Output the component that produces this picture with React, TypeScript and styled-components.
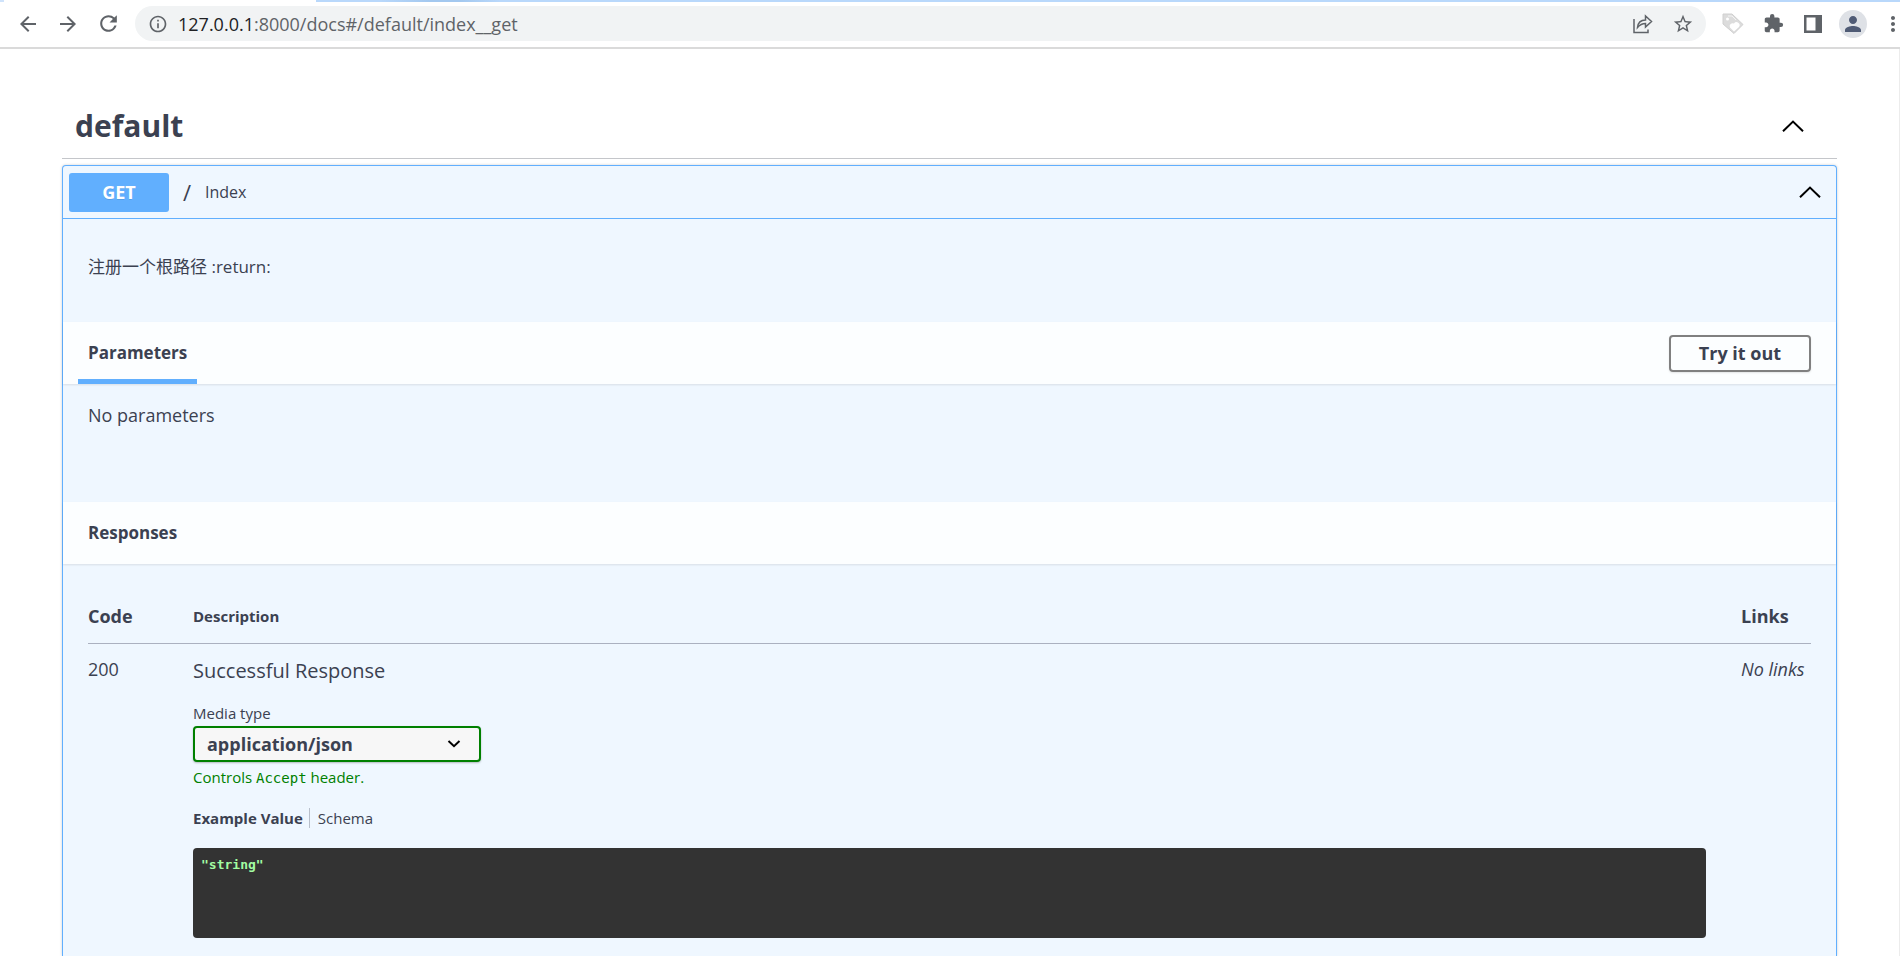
import React from "react";
import styled, { createGlobalStyle } from "styled-components";
import {
  MdArrowBack,
  MdArrowForward,
  MdRefresh,
  MdInfoOutline,
  MdStarBorder,
  MdExtension,
  MdPerson,
  MdMoreVert,
} from "react-icons/md";

const ink = "#3b4151";
const blue = "#61affe";
const sans = '"Open Sans", "Noto Sans CJK SC", sans-serif';

const GlobalStyle = createGlobalStyle`
  *, *::before, *::after { box-sizing: border-box; }
  body { margin: 0; background: #fff; color: ${ink}; font-family: ${sans}; }
  button, select { font-family: inherit; color: inherit; }
  h2, h4, p, pre { margin: 0; }
`;

const Page = styled.div`
  display: flex;
  flex-direction: column;
  min-height: 100vh;
`;

/* Browser chrome */

const TabStrip = styled.div`
  display: flex;
  height: 2px;
  background: linear-gradient(90deg, #b9d8fb 0 380px, #a3c8ef 430px 460px, #b9d8fb 500px);
`;

const ActiveTab = styled.div`
  width: 316px;
  border-left: 4px solid #cfe3fb;
  background: #fff;
`;

const Toolbar = styled.header`
  display: flex;
  align-items: center;
  height: 47px;
  padding: 0 0 2px 8px;
  border-bottom: 2px solid #dadada;
  overflow: hidden;
`;

const IconButton = styled.button`
  display: grid;
  flex: none;
  place-items: center;
  width: 40px;
  height: 34px;
  padding: 0;
  border: 0;
  background: none;
  color: #5f6368;
`;

const MenuButton = styled(IconButton)`
  width: 27px;
  padding-left: 8px;
`;

const AddressBar = styled.div`
  display: flex;
  flex: 1;
  align-items: center;
  height: 35px;
  margin: 0 7px;
  padding: 0 3px;
  border-radius: 18px;
  background: #f1f3f4;
`;

const Url = styled.span`
  flex: 1;
  color: #5f6368;
  font-size: 18px;
  line-height: 24px;
`;

const Host = styled.span`
  color: #202124;
`;

const Avatar = styled.span`
  display: grid;
  place-items: center;
  width: 28px;
  height: 28px;
  border-radius: 50%;
  background: #dee1e6;
  color: #4f5b75;
`;

/* Documentation page */

const Docs = styled.main`
  display: flex;
  flex: 1;
  flex-direction: column;
  padding: 40px 62px 0;
  border-right: 1px solid #ececec;
`;

const TagHeader = styled.div`
  display: flex;
  align-items: center;
  justify-content: space-between;
  height: 70px;
  padding: 4px 24px 0 13px;
  border-bottom: 1px solid rgba(59, 65, 81, 0.3);
`;

const TagTitle = styled.h2`
  font-size: 30px;
  line-height: 40px;
`;

const ToggleButton = styled(IconButton)`
  color: #000;
`;

const Operation = styled.section`
  display: flex;
  flex: 1;
  flex-direction: column;
  margin-top: 6px;
  border: 1px solid ${blue};
  border-bottom: 0;
  border-radius: 4px 4px 0 0;
  background: #eff7ff;
  box-shadow: 0 0 3px rgba(0, 0, 0, 0.19);
`;

const Summary = styled.div`
  display: flex;
  align-items: center;
  height: 53px;
  padding: 0 6px;
  border-bottom: 1px solid ${blue};
`;

const Method = styled.span`
  width: 100px;
  border-radius: 3px;
  background: ${blue};
  color: #fff;
  font-size: 18px;
  font-weight: 700;
  line-height: 39px;
  text-align: center;
  text-shadow: 0 1px 0 rgba(0, 0, 0, 0.1);
`;

const Path = styled.span`
  width: 36px;
  padding-left: 14px;
  font-size: 22px;
  line-height: 24px;
`;

const SummaryText = styled.span`
  flex: 1;
  font-size: 16px;
  line-height: 24px;
`;

const Description = styled.p`
  padding: 36px 25px 43px;
  font-size: 17px;
  line-height: 24px;
`;

const SectionHeader = styled.div`
  display: flex;
  align-items: center;
  justify-content: space-between;
  height: 62px;
  padding: 0 25px;
  background: rgba(255, 255, 255, 0.8);
  box-shadow: 0 1px 2px rgba(0, 0, 0, 0.1);
`;

const SectionTitle = styled.h4<{ $active?: boolean }>`
  align-self: stretch;
  margin-left: -10px;
  padding: 0 10px;
  border-bottom: ${(p) => (p.$active ? `5px solid ${blue}` : "0")};
  font-size: 17px;
  line-height: 62px;
`;

const TryButton = styled.button`
  width: 142px;
  height: 37px;
  padding: 0;
  border: 2px solid #808080;
  border-radius: 4px;
  background: transparent;
  box-shadow: 0 1px 2px rgba(0, 0, 0, 0.1);
  font-size: 18px;
  font-weight: 700;
`;

const EmptyNote = styled.p`
  padding: 19px 25px 75px;
  font-size: 18px;
  line-height: 24px;
`;

const ResponseTable = styled.table`
  width: calc(100% - 50px);
  margin: 25px 25px 18px;
  border-collapse: collapse;
  table-layout: fixed;
  font-size: 18px;
  line-height: 24px;
  text-align: left;

  th {
    height: 54px;
    padding: 0;
    border-bottom: 1px solid #abb1c0;
    vertical-align: middle;
  }
  td {
    padding: 13px 0 0;
    vertical-align: top;
  }
  th:last-child, td:last-child { padding-left: 35px; white-space: nowrap; }
`;

const SideCol = styled.col`
  width: 105px;
`;

const SmallHead = styled.th`
  font-size: 15px;
`;

const ResponseText = styled.p`
  font-size: 20px;
  line-height: 28px;
`;

const MediaLabel = styled.label`
  display: block;
  margin-top: 15px;
  font-size: 15px;
  line-height: 26px;
`;

const SelectBox = styled.div`
  position: relative;
  width: 288px;
  height: 36px;

  svg { position: absolute; top: 13px; right: 20px; pointer-events: none; }
`;

const MediaSelect = styled.select`
  width: 100%;
  height: 100%;
  padding: 0 40px 0 12px;
  appearance: none;
  border: 2px solid #008000;
  border-radius: 4px;
  background: #f7f7f7;
  box-shadow: 0 1px 2px rgba(0, 0, 0, 0.25);
  font-size: 18px;
  font-weight: 700;
`;

const Hint = styled.p`
  margin-top: 3px;
  color: #008000;
  font-size: 15px;
  line-height: 24px;

  code { font-family: "DejaVu Sans Mono", monospace; font-size: 14px; }
`;

const ViewTabs = styled.div`
  display: flex;
  align-items: center;
  margin: 18px 0 20px;
`;

const ViewTab = styled.button<{ $active?: boolean }>`
  height: 20px;
  padding: ${(p) => (p.$active ? "0 6px 0 0" : "0 0 0 8px")};
  border: 0;
  border-right: ${(p) => (p.$active ? "1px solid #b8bfcb" : "0")};
  background: none;
  font-size: 15px;
  font-weight: ${(p) => (p.$active ? 700 : 400)};
  line-height: 20px;
`;

const Example = styled.pre`
  height: 90px;
  padding: 8px;
  border-radius: 4px;
  background: #333;
  color: #a2fca2;
  font: 700 13px/18px "DejaVu Sans Mono", monospace;
`;

const Chevron = () => (
  <svg width="22" height="12" viewBox="0 0 22 12" fill="none" stroke="currentColor" strokeWidth="2">
    <path d="M1 11.3 11 1.6l10 9.7" />
  </svg>
);

const ShareIcon = () => (
  <svg width="20" height="20" viewBox="0 0 20 20" fill="none" stroke="currentColor" strokeWidth="1.5">
    <path d="M1 5v13.500h14v-3M4.500 13.500C5 8.500 8 6 12.500 6V2l6 5.500-6 5.500V9.500C9 9.500 7 10.500 4.500 13.500Z" />
  </svg>
);

const TagIcon = () => (
  <svg width="22" height="22" viewBox="0 0 22 22">
    <path d="M1 1h9l11 10.500-9 9L1 11Z" fill="#dcdcdc" stroke="#d0d0d0" strokeLinejoin="round" />
    <path d="m12 18.500-4-4a3 3 0 0 1 4-4 3 3 0 0 1 5 3.500Z" fill="#fff" />
    <circle cx="5.500" cy="6" r="1.500" fill="#fff" />
    <path d="M6 3h4l4 4" fill="none" stroke="#f4f4f4" />
  </svg>
);

const PanelIcon = () => (
  <svg width="18" height="18" viewBox="0 0 18 18" fill="currentColor">
    <path d="M0 0h18v18H0ZM2.500 2.500v13h9v-13Z" fillRule="evenodd" />
  </svg>
);

export default function App() {
  return (
    <Page>
      <GlobalStyle />
      <TabStrip>
        <ActiveTab />
      </TabStrip>
      <Toolbar>
        <IconButton aria-label="Back"><MdArrowBack size={24} /></IconButton>
        <IconButton aria-label="Forward"><MdArrowForward size={24} /></IconButton>
        <IconButton aria-label="Reload"><MdRefresh size={25} /></IconButton>
        <AddressBar>
          <IconButton aria-label="Site information"><MdInfoOutline size={20} /></IconButton>
          <Url><Host>127.0.0.1</Host>:8000/docs#/default/index__get</Url>
          <IconButton aria-label="Share"><ShareIcon /></IconButton>
          <IconButton aria-label="Bookmark"><MdStarBorder size={22} /></IconButton>
        </AddressBar>
        <IconButton aria-label="Tag extension"><TagIcon /></IconButton>
        <IconButton aria-label="Extensions"><MdExtension size={21} /></IconButton>
        <IconButton aria-label="Side panel"><PanelIcon /></IconButton>
        <IconButton aria-label="Profile"><Avatar><MdPerson size={24} /></Avatar></IconButton>
        <MenuButton aria-label="Menu"><MdMoreVert size={24} /></MenuButton>
      </Toolbar>
      <Docs>
        <TagHeader>
          <TagTitle>default</TagTitle>
          <ToggleButton aria-label="Collapse section"><Chevron /></ToggleButton>
        </TagHeader>
        <Operation>
          <Summary>
            <Method>GET</Method>
            <Path>/</Path>
            <SummaryText>Index</SummaryText>
            <ToggleButton aria-label="Collapse operation"><Chevron /></ToggleButton>
          </Summary>
          <Description>注册一个根路径 :return:</Description>
          <SectionHeader>
            <SectionTitle $active>Parameters</SectionTitle>
            <TryButton>Try it out</TryButton>
          </SectionHeader>
          <EmptyNote>No parameters</EmptyNote>
          <SectionHeader>
            <SectionTitle>Responses</SectionTitle>
          </SectionHeader>
          <ResponseTable>
            <colgroup>
              <SideCol />
              <col />
              <SideCol />
            </colgroup>
            <thead>
              <tr>
                <th>Code</th>
                <SmallHead>Description</SmallHead>
                <th>Links</th>
              </tr>
            </thead>
            <tbody>
              <tr>
                <td>200</td>
                <td>
                  <ResponseText>Successful Response</ResponseText>
                  <MediaLabel htmlFor="media-type">Media type</MediaLabel>
                  <SelectBox>
                    <MediaSelect id="media-type">
                      <option>application/json</option>
                    </MediaSelect>
                    <svg width="14" height="10" viewBox="0 0 14 10" fill="none" stroke="#000" strokeWidth="2">
                      <path d="m1.500 2 5.500 5.200L12.500 2" />
                    </svg>
                  </SelectBox>
                  <Hint>Controls <code>Accept</code> header.</Hint>
                  <ViewTabs>
                    <ViewTab $active>Example Value</ViewTab>
                    <ViewTab>Schema</ViewTab>
                  </ViewTabs>
                  <Example>"string"</Example>
                </td>
                <td><i>No links</i></td>
              </tr>
            </tbody>
          </ResponseTable>
        </Operation>
      </Docs>
    </Page>
  );
}
